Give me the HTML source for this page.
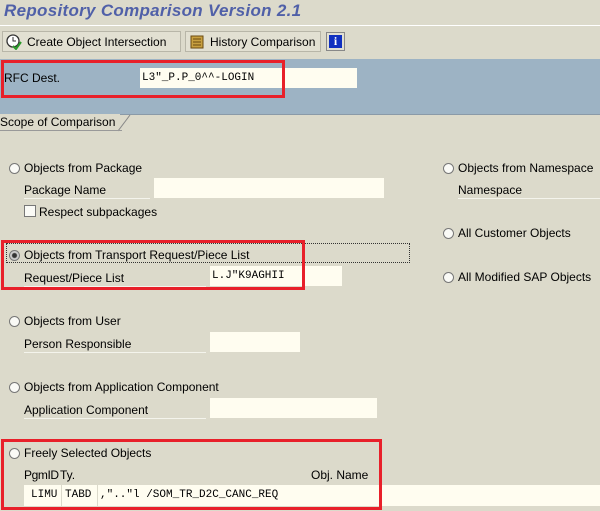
<!DOCTYPE html>
<html><head><style>
body{margin:0;width:600px;height:511px;overflow:hidden;background:#dcdacb;font-family:"Liberation Sans","DejaVu Sans",sans-serif;font-size:12px;color:#000;position:relative}
.a{position:absolute;white-space:nowrap}
.t{position:absolute;white-space:nowrap;margin-top:1px}
.title{left:4px;top:1px;font-size:17px;font-weight:bold;font-style:italic;color:#5060a8;letter-spacing:0.3px}
.btn{position:absolute;top:31px;height:21px;border:1px solid #b8b6a8;background:#e2e0d2;box-sizing:border-box;line-height:20px;padding-left:24px}
.inp{position:absolute;background:#fffdf0;height:20px}
.mono{font-family:"Liberation Mono",monospace;font-size:11px}
.radio{position:absolute;width:11px;height:11px;border:1px solid #777;border-radius:50%;background:#fafaf6;box-sizing:border-box;margin-top:2px}
.lbl{position:absolute;border-bottom:1px solid #f4f4ec;height:18px;line-height:20px}
.red{position:absolute;border:3px solid #e8202a;box-sizing:border-box}
</style></head><body>
<div class="a title">Repository Comparison Version 2.1</div>
<div class="a" style="left:0;top:25px;width:600px;height:1px;background:#fff"></div>

<div class="btn" style="left:2px;width:179px">
<svg class="a" style="left:3px;top:2px" width="16" height="16"><circle cx="7" cy="7" r="6" fill="#fff" stroke="#333" stroke-width="1.3"/><path d="M7 3v4h3" stroke="#333" fill="none"/><path d="M7 12l3 3 5-7" stroke="#2a9a2a" stroke-width="2" fill="none"/></svg>Create Object Intersection</div>
<div class="btn" style="left:185px;width:136px">
<svg class="a" style="left:3px;top:2px" width="16" height="16"><rect x="2" y="2" width="12" height="12" fill="#c8a040" stroke="#6a4a10"/><path d="M4 5h8M4 8h8M4 11h8" stroke="#6a4a10"/></svg>History Comparison</div>
<div class="a" style="left:326px;top:32px;width:19px;height:19px;background:#e2e0d2;border:1px solid #888;box-sizing:border-box"><div style="margin:2px;width:13px;height:13px;background:#1030c0;color:#fff;font-weight:bold;font-size:12px;line-height:13px;text-align:center;font-family:'Liberation Serif',serif">i</div></div>

<div class="a" style="left:0;top:59px;width:600px;height:56px;background:#9db3c4"></div>
<div class="t" style="left:4px;top:70px">RFC Dest.</div>
<div class="inp mono" style="left:140px;top:68px;width:215px;line-height:20px;padding-left:2px">L3"_P.P_0^^-LOGIN</div>
<div class="red" style="left:1px;top:60px;width:284px;height:38px"></div>

<div class="a" style="left:0;top:114px;width:600px;height:1px;background:#8a9aa8"></div>
<div class="a" style="left:0;top:114px;width:120px;height:17px;background:#dcdacb;line-height:17px">Scope of Comparison</div>
<svg class="a" style="left:118px;top:114px" width="14" height="18"><path d="M0 17L12 1" stroke="#888"/></svg>
<div class="a" style="left:0;top:130px;width:122px;height:1px;background:#999"></div>

<div class="radio" style="left:9px;top:161px"></div><div class="t" style="left:24px;top:160px">Objects from Package</div>
<div class="lbl" style="left:24px;top:180px;width:126px">Package Name</div>
<div class="inp" style="left:154px;top:178px;width:230px"></div>
<div class="a" style="left:24px;top:205px;width:12px;height:12px;border:1px solid #777;background:#fafaf6;box-sizing:border-box"></div>
<div class="t" style="left:39px;top:204px">Respect subpackages</div>

<div class="radio" style="left:443px;top:161px"></div><div class="t" style="left:458px;top:160px">Objects from Namespace</div>
<div class="lbl" style="left:458px;top:180px;width:142px">Namespace</div>
<div class="radio" style="left:443px;top:226px"></div><div class="t" style="left:458px;top:225px">All Customer Objects</div>
<div class="radio" style="left:443px;top:270px"></div><div class="t" style="left:458px;top:269px">All Modified SAP Objects</div>

<div class="a" style="left:6px;top:243px;width:404px;height:20px;border:1px dotted #333;box-sizing:border-box"></div>
<div class="radio" style="left:9px;top:248px;background:radial-gradient(circle,#333 0 2px,#ccc 3px)"></div><div class="t" style="left:24px;top:247px">Objects from Transport Request/Piece List</div>
<div class="lbl" style="left:24px;top:268px;width:182px">Request/Piece List</div>
<div class="inp mono" style="left:210px;top:266px;width:132px;line-height:20px;padding-left:2px;box-sizing:border-box">L.J"K9AGHII</div>
<div class="red" style="left:1px;top:240px;width:304px;height:50px"></div>

<div class="radio" style="left:9px;top:314px"></div><div class="t" style="left:24px;top:313px">Objects from User</div>
<div class="lbl" style="left:24px;top:334px;width:182px">Person Responsible</div>
<div class="inp" style="left:210px;top:332px;width:90px"></div>

<div class="radio" style="left:9px;top:380px"></div><div class="t" style="left:24px;top:379px">Objects from Application Component</div>
<div class="lbl" style="left:24px;top:400px;width:182px">Application Component</div>
<div class="inp" style="left:210px;top:398px;width:167px"></div>

<div class="radio" style="left:9px;top:446px"></div><div class="t" style="left:24px;top:445px">Freely Selected Objects</div>
<div class="t" style="left:24px;top:467px;letter-spacing:-0.4px">PgmID</div><div class="t" style="left:60px;top:467px">Ty.</div><div class="t" style="left:311px;top:467px">Obj. Name</div>
<div class="inp" style="left:24px;top:485px;width:576px;height:21px"></div>
<div class="a" style="left:61px;top:485px;width:1px;height:26px;background:#dcdacb"></div>
<div class="a" style="left:97px;top:485px;width:1px;height:26px;background:#dcdacb"></div>
<div class="a mono" style="left:31px;top:489px">LIMU</div>
<div class="a mono" style="left:65px;top:489px">TABD</div>
<div class="a mono" style="left:100px;top:489px">,".."l /SOM_TR_D2C_CANC_REQ</div>
<div class="red" style="left:1px;top:439px;width:381px;height:71px"></div>
</body></html>
